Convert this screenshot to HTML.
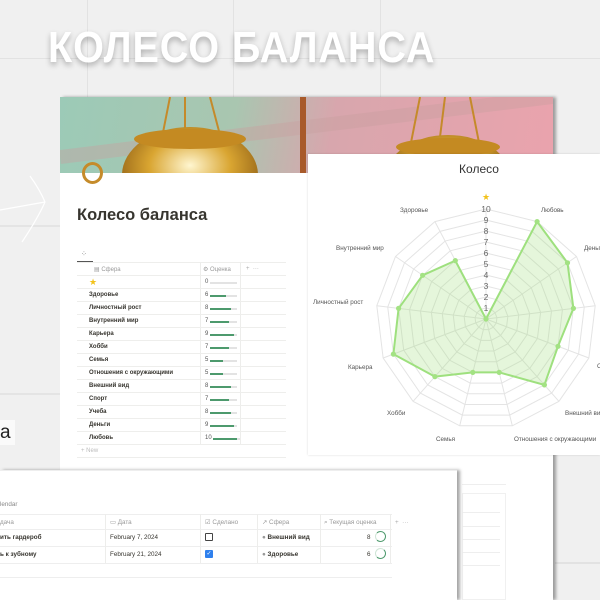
<!DOCTYPE html>
<html><head><meta charset="utf-8"><style>
*{margin:0;padding:0;box-sizing:border-box}
body{width:600px;height:600px;overflow:hidden;background:#f0f0f0;position:relative;font-family:"Liberation Sans","DejaVu Sans",sans-serif;color:#37352f}
.abs{position:absolute}
.vl{position:absolute;width:1px;background:#e2e2e2}
.hl{position:absolute;height:1px;background:#e2e2e2}
.title{left:48px;top:23px;font-size:44px;font-weight:bold;color:#fff;letter-spacing:1px;transform:scaleX(0.9);transform-origin:left top;text-shadow:0 3px 6px rgba(0,0,0,.28);white-space:nowrap}
.row{position:absolute;left:77px;width:209px;height:13px;border-bottom:1px solid #eeeeec;font-size:6px;font-weight:bold;color:#37352f}
.row .n{position:absolute;left:12px;top:3px}
.row .v{position:absolute;left:128px;top:3px;font-weight:normal;color:#555}
.row .bg{position:absolute;left:133px;top:6px;width:27px;height:1.5px;background:#e3e3e3}
.row .fg{position:absolute;left:133px;top:5.5px;height:2px;background:#4d9a6d}
.cd{position:absolute;width:1px;background:#ededeb}
</style></head><body>
<div class="vl" style="left:87px;top:0;height:97px"></div>
<div class="vl" style="left:233px;top:0;height:97px"></div>
<div class="vl" style="left:380px;top:0;height:97px"></div>
<div class="hl" style="left:0;top:58px;width:600px"></div>
<div class="hl" style="left:0;top:225px;width:60px;background:#e4e4e4;height:2px"></div>
<div class="hl" style="left:0;top:393px;width:60px;background:#e4e4e4;height:2px"></div>
<div class="hl" style="left:555px;top:562px;width:45px;height:2px"></div>
<svg class="abs" style="left:0;top:170px" width="60" height="80"><path d="M0 40 L45 32 M30 6 Q40 20 45 32 Q38 48 22 72" stroke="#fff" stroke-width="1.2" fill="none"/></svg>
<div class="abs" style="left:0;top:420px;width:15px;height:25px;background:#fafafa;font-size:19px;line-height:25px;color:#222">a</div>

<div class="abs title">КОЛЕСО БАЛАНСА</div>

<div class="abs" style="left:60px;top:97px;width:493px;height:503px;background:#fff;box-shadow:3px 0 3px rgba(0,0,0,.35)"></div>
<div class="abs" style="left:60px;top:97px;width:493px;height:76px;overflow:hidden;background:linear-gradient(100deg,#9ccab7 0%,#a9c6b0 35%,#d8a6ad 55%,#eaa3ad 100%)">
<svg width="493" height="76">
<defs><radialGradient id="g" cx="50%" cy="40%" r="60%"><stop offset="0" stop-color="#fff6d0"/><stop offset=".5" stop-color="#d9a531"/><stop offset="1" stop-color="#8a5a14"/></radialGradient></defs>
<path d="M0 60 L493 0" stroke="#c9a0a0" stroke-width="14" opacity=".4"/>
<rect x="240" y="0" width="6" height="76" fill="#a85a2a"/>
<path d="M110 0 L95 76 M125 0 L125 40 M150 0 L170 76" stroke="#c58a2a" stroke-width="2" fill="none"/>
<ellipse cx="130" cy="78" rx="68" ry="48" fill="url(#g)"/>
<ellipse cx="130" cy="42" rx="56" ry="10" fill="#c48a22"/>
<path d="M360 0 L345 76 M385 0 L380 40 M410 0 L425 76" stroke="#c58a2a" stroke-width="2" fill="none"/>
<ellipse cx="388" cy="80" rx="62" ry="42" fill="url(#g)"/>
<ellipse cx="388" cy="50" rx="52" ry="9" fill="#c48a22"/>
</svg></div>
<div class="abs" style="left:82px;top:162px;width:21px;height:22px;border:3px solid #c58b2a;border-radius:50%"></div>
<div class="abs" style="left:77px;top:206px;font-size:16.5px;font-weight:bold;color:#37352f">Колесо баланса</div>

<div class="abs" style="left:81px;top:250px;font-size:7px;color:#666">⁘</div>
<div class="abs" style="left:77px;top:261px;width:16px;height:1px;background:#555"></div>
<div class="abs" style="left:77px;top:262px;width:209px;height:1px;background:#eeeeec"></div>
<div class="row" style="top:263px;font-weight:normal;color:#999"><span class="n" style="left:17px">▤ Сфера</span><span class="v" style="left:126px;color:#999">⚙ Оценка</span><span class="v" style="left:169px;color:#aaa">+ &nbsp;···</span></div>
<div class="cd" style="left:200px;top:263px;height:182px"></div>
<div class="cd" style="left:240px;top:263px;height:182px"></div>
<div class="row" style="top:276px"><span class="n" style="color:#f2c21b;top:1px;font-size:9px">★</span><span class="v">0</span><span class="bg"></span></div>
<div class="row" style="top:289px"><span class="n">Здоровье</span><span class="v">6</span><span class="bg"></span><span class="fg" style="width:16px"></span></div>
<div class="row" style="top:302px"><span class="n">Личностный рост</span><span class="v">8</span><span class="bg"></span><span class="fg" style="width:21px"></span></div>
<div class="row" style="top:315px"><span class="n">Внутренний мир</span><span class="v">7</span><span class="bg"></span><span class="fg" style="width:19px"></span></div>
<div class="row" style="top:328px"><span class="n">Карьера</span><span class="v">9</span><span class="bg"></span><span class="fg" style="width:24px"></span></div>
<div class="row" style="top:341px"><span class="n">Хобби</span><span class="v">7</span><span class="bg"></span><span class="fg" style="width:19px"></span></div>
<div class="row" style="top:354px"><span class="n">Семья</span><span class="v">5</span><span class="bg"></span><span class="fg" style="width:13px"></span></div>
<div class="row" style="top:367px"><span class="n">Отношения с окружающими</span><span class="v">5</span><span class="bg"></span><span class="fg" style="width:13px"></span></div>
<div class="row" style="top:380px"><span class="n">Внешний вид</span><span class="v">8</span><span class="bg"></span><span class="fg" style="width:21px"></span></div>
<div class="row" style="top:393px"><span class="n">Спорт</span><span class="v">7</span><span class="bg"></span><span class="fg" style="width:19px"></span></div>
<div class="row" style="top:406px"><span class="n">Учеба</span><span class="v">8</span><span class="bg"></span><span class="fg" style="width:21px"></span></div>
<div class="row" style="top:419px"><span class="n">Деньги</span><span class="v">9</span><span class="bg"></span><span class="fg" style="width:24px"></span></div>
<div class="row" style="top:432px"><span class="n">Любовь</span><span class="v">10</span><span class="bg" style="left:136px"></span><span class="fg" style="left:136px;width:24px"></span></div>
<div class="row" style="top:445px;font-weight:normal;color:#bbb"><span class="n" style="left:4px">+ New</span></div>

<div class="hl" style="left:462px;top:484px;width:44px;background:#eee"></div>
<div class="abs" style="left:462px;top:493px;width:44px;height:107px;border:1px solid #f0f0f0"></div>
<div class="hl" style="left:462px;top:512px;width:38px;background:#eee"></div>
<div class="hl" style="left:462px;top:526px;width:38px;background:#eee"></div>
<div class="hl" style="left:462px;top:539px;width:38px;background:#eee"></div>
<div class="hl" style="left:462px;top:552px;width:38px;background:#eee"></div>
<div class="hl" style="left:462px;top:565px;width:38px;background:#eee"></div>

<div class="abs" style="left:308px;top:154px;width:292px;height:301px;background:#fff;box-shadow:0 0 2px rgba(0,0,0,.15)"></div>
<svg class="abs" style="left:0;top:0" width="600" height="600" font-family="Liberation Sans, DejaVu Sans, sans-serif">
<text x="479" y="173" font-size="12" text-anchor="middle" fill="#333">Колесо</text>
<g fill="none" stroke="#e4e4e4">
<polygon vector-effect="non-scaling-stroke" transform="translate(486 319) scale(11)" points="0,-1 .4647,-.8855 .823,-.5681 .9927,-.1205 .935,.3546 .6631,.7485 .2393,.9709 -.2393,.9709 -.6631,.7485 -.935,.3546 -.9927,-.1205 -.823,-.5681 -.4647,-.8855"/>
<polygon vector-effect="non-scaling-stroke" transform="translate(486 319) scale(22)" points="0,-1 .4647,-.8855 .823,-.5681 .9927,-.1205 .935,.3546 .6631,.7485 .2393,.9709 -.2393,.9709 -.6631,.7485 -.935,.3546 -.9927,-.1205 -.823,-.5681 -.4647,-.8855"/>
<polygon vector-effect="non-scaling-stroke" transform="translate(486 319) scale(33)" points="0,-1 .4647,-.8855 .823,-.5681 .9927,-.1205 .935,.3546 .6631,.7485 .2393,.9709 -.2393,.9709 -.6631,.7485 -.935,.3546 -.9927,-.1205 -.823,-.5681 -.4647,-.8855"/>
<polygon vector-effect="non-scaling-stroke" transform="translate(486 319) scale(44)" points="0,-1 .4647,-.8855 .823,-.5681 .9927,-.1205 .935,.3546 .6631,.7485 .2393,.9709 -.2393,.9709 -.6631,.7485 -.935,.3546 -.9927,-.1205 -.823,-.5681 -.4647,-.8855"/>
<polygon vector-effect="non-scaling-stroke" transform="translate(486 319) scale(55)" points="0,-1 .4647,-.8855 .823,-.5681 .9927,-.1205 .935,.3546 .6631,.7485 .2393,.9709 -.2393,.9709 -.6631,.7485 -.935,.3546 -.9927,-.1205 -.823,-.5681 -.4647,-.8855"/>
<polygon vector-effect="non-scaling-stroke" transform="translate(486 319) scale(66)" points="0,-1 .4647,-.8855 .823,-.5681 .9927,-.1205 .935,.3546 .6631,.7485 .2393,.9709 -.2393,.9709 -.6631,.7485 -.935,.3546 -.9927,-.1205 -.823,-.5681 -.4647,-.8855"/>
<polygon vector-effect="non-scaling-stroke" transform="translate(486 319) scale(77)" points="0,-1 .4647,-.8855 .823,-.5681 .9927,-.1205 .935,.3546 .6631,.7485 .2393,.9709 -.2393,.9709 -.6631,.7485 -.935,.3546 -.9927,-.1205 -.823,-.5681 -.4647,-.8855"/>
<polygon vector-effect="non-scaling-stroke" transform="translate(486 319) scale(88)" points="0,-1 .4647,-.8855 .823,-.5681 .9927,-.1205 .935,.3546 .6631,.7485 .2393,.9709 -.2393,.9709 -.6631,.7485 -.935,.3546 -.9927,-.1205 -.823,-.5681 -.4647,-.8855"/>
<polygon vector-effect="non-scaling-stroke" transform="translate(486 319) scale(99)" points="0,-1 .4647,-.8855 .823,-.5681 .9927,-.1205 .935,.3546 .6631,.7485 .2393,.9709 -.2393,.9709 -.6631,.7485 -.935,.3546 -.9927,-.1205 -.823,-.5681 -.4647,-.8855"/>
<polygon vector-effect="non-scaling-stroke" transform="translate(486 319) scale(110)" points="0,-1 .4647,-.8855 .823,-.5681 .9927,-.1205 .935,.3546 .6631,.7485 .2393,.9709 -.2393,.9709 -.6631,.7485 -.935,.3546 -.9927,-.1205 -.823,-.5681 -.4647,-.8855"/>
<path d="M486 319 L486 209 M486 319 L537.1 221.6 M486 319 L576.5 256.5 M486 319 L595.2 305.7 M486 319 L588.9 358 M486 319 L558.9 401.3 M486 319 L512.3 425.8 M486 319 L459.7 425.8 M486 319 L413.1 401.3 M486 319 L383.2 358 M486 319 L376.8 305.7 M486 319 L395.5 256.5 M486 319 L434.9 221.6"/>
</g>
<polygon points="486,319 537.1,221.6 567.5,262.8 573.4,308.4 558,346.3 544.4,384.9 499.2,372.4 472.8,372.4 434.9,376.6 393.4,354.1 398.6,308.4 422.6,275.3 455.3,260.6" fill="rgba(150,220,110,.25)" stroke="#9ee07e" stroke-width="2" stroke-linejoin="round"/>
<g fill="#a3e283">
<circle cx="486" cy="319" r="2.6"/><circle cx="537.1" cy="221.6" r="2.6"/><circle cx="567.5" cy="262.8" r="2.6"/><circle cx="573.4" cy="308.4" r="2.6"/><circle cx="558" cy="346.3" r="2.6"/><circle cx="544.4" cy="384.9" r="2.6"/><circle cx="499.2" cy="372.4" r="2.6"/><circle cx="472.8" cy="372.4" r="2.6"/><circle cx="434.9" cy="376.6" r="2.6"/><circle cx="393.4" cy="354.1" r="2.6"/><circle cx="398.6" cy="308.4" r="2.6"/><circle cx="422.6" cy="275.3" r="2.6"/><circle cx="455.3" cy="260.6" r="2.6"/>
</g>
<g font-size="8.5" fill="#666" text-anchor="middle">
<text x="486" y="212">10</text><text x="486" y="223">9</text><text x="486" y="234">8</text><text x="486" y="245">7</text><text x="486" y="256">6</text><text x="486" y="267">5</text><text x="486" y="278">4</text><text x="486" y="289">3</text><text x="486" y="300">2</text><text x="486" y="311">1</text>
</g>
<text x="486" y="200" font-size="9" fill="#f2c21b" text-anchor="middle">★</text>
<g font-size="6.3" fill="#555">
<text x="400" y="212">Здоровье</text>
<text x="541" y="212">Любовь</text>
<text x="336" y="250">Внутренний мир</text>
<text x="313" y="304">Личностный рост</text>
<text x="348" y="369">Карьера</text>
<text x="387" y="415">Хобби</text>
<text x="436" y="441">Семья</text>
<text x="514" y="441">Отношения с окружающими</text>
<text x="565" y="415">Внешний вид</text>
<text x="584" y="250">Деньги</text>
<text x="597" y="368">Спорт</text>
</g>
</svg>

<div class="abs" style="left:0;top:470px;width:457px;height:130px;background:#fff;border-top:1px solid #eee;box-shadow:3px 0 3px rgba(0,0,0,.35);font-size:6.3px;color:#37352f;overflow:hidden">
<div class="abs" style="left:0;top:30px;color:#888">lendar</div>
<div class="abs" style="left:0;top:43px;width:392px;height:1px;background:#eee"></div>
<div class="abs" style="left:0;top:58px;width:392px;height:1px;background:#eee"></div>
<div class="abs" style="left:0;top:75px;width:392px;height:1px;background:#eee"></div>
<div class="abs" style="left:0;top:92px;width:392px;height:1px;background:#eee"></div>
<div class="abs" style="left:0;top:106px;width:392px;height:1px;background:#eee"></div>
<div class="cd" style="left:105px;top:43px;height:49px"></div>
<div class="cd" style="left:200px;top:43px;height:49px"></div>
<div class="cd" style="left:257px;top:43px;height:49px"></div>
<div class="cd" style="left:320px;top:43px;height:49px"></div>
<div class="cd" style="left:390px;top:43px;height:49px"></div>
<div class="abs" style="left:0;top:48px;color:#999">дача</div>
<div class="abs" style="left:110px;top:48px;color:#999">▭ Дата</div>
<div class="abs" style="left:205px;top:48px;color:#999">☑ Сделано</div>
<div class="abs" style="left:262px;top:48px;color:#999">↗ Сфера</div>
<div class="abs" style="left:324px;top:48px;color:#999">⌕ Текущая оценка</div>
<div class="abs" style="left:395px;top:48px;color:#aaa">+ &nbsp;···</div>
<div class="abs" style="left:0;top:63px;font-weight:bold">ить гардероб</div>
<div class="abs" style="left:110px;top:63px">February 7, 2024</div>
<div class="abs" style="left:205px;top:62px;width:8px;height:8px;border:1px solid #444;border-radius:1px"></div>
<div class="abs" style="left:262px;top:63px;font-weight:bold"><span style="color:#999">●</span> Внешний вид</div>
<div class="abs" style="left:367px;top:63px">8</div>
<div class="abs" style="left:375px;top:60px;width:11px;height:11px;border:1.5px solid #4d9a6d;border-radius:50%;border-left-color:#cfe5d6"></div>
<div class="abs" style="left:0;top:80px;font-weight:bold">ь к зубному</div>
<div class="abs" style="left:110px;top:80px">February 21, 2024</div>
<div class="abs" style="left:205px;top:79px;width:8px;height:8px;background:#2f80ed;border-radius:1px;color:#fff;font-size:6px;line-height:8px;text-align:center">✓</div>
<div class="abs" style="left:262px;top:80px;font-weight:bold"><span style="color:#999">●</span> Здоровье</div>
<div class="abs" style="left:367px;top:80px">6</div>
<div class="abs" style="left:375px;top:77px;width:11px;height:11px;border:1.5px solid #4d9a6d;border-radius:50%;border-left-color:#cfe5d6;border-top-color:#cfe5d6"></div>
</div>
</body></html>
